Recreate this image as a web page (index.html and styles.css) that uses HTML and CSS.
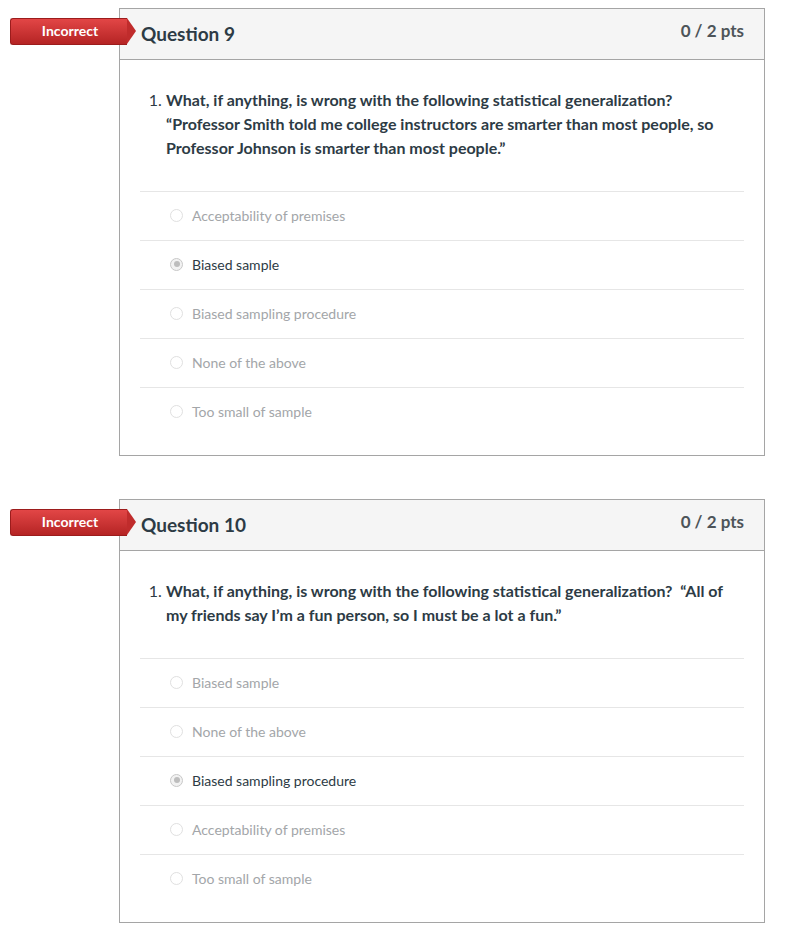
FILE: index.html
```html
<!DOCTYPE html>
<html>
<head>
<meta charset="utf-8">
<link rel="stylesheet" href="styles.css">
</head>
<body>
<div class="page">
  <div class="question">
    <div class="badge"><span>Incorrect</span></div>
    <div class="q-header">
      <div class="q-title">Question 9</div>
      <div class="q-pts">0 / 2 pts</div>
    </div>
    <div class="q-body">
      <ol class="q-text">
        <li>What, if anything, is wrong with the following statistical generalization? “Professor Smith told me college instructors are smarter than most people, so Professor Johnson is smarter than most people.”</li>
      </ol>
      <div class="answers">
        <div class="answer"><span class="radio"></span><span class="label">Acceptability of premises</span></div>
        <div class="answer selected"><span class="radio"></span><span class="label">Biased sample</span></div>
        <div class="answer"><span class="radio"></span><span class="label">Biased sampling procedure</span></div>
        <div class="answer"><span class="radio"></span><span class="label">None of the above</span></div>
        <div class="answer"><span class="radio"></span><span class="label">Too small of sample</span></div>
      </div>
    </div>
  </div>

  <div class="question">
    <div class="badge"><span>Incorrect</span></div>
    <div class="q-header">
      <div class="q-title">Question 10</div>
      <div class="q-pts">0 / 2 pts</div>
    </div>
    <div class="q-body">
      <ol class="q-text">
        <li>What, if anything, is wrong with the following statistical generalization?&nbsp; “All of my friends say I’m a fun person, so I must be a lot a fun.”</li>
      </ol>
      <div class="answers">
        <div class="answer"><span class="radio"></span><span class="label">Biased sample</span></div>
        <div class="answer"><span class="radio"></span><span class="label">None of the above</span></div>
        <div class="answer selected"><span class="radio"></span><span class="label">Biased sampling procedure</span></div>
        <div class="answer"><span class="radio"></span><span class="label">Acceptability of premises</span></div>
        <div class="answer"><span class="radio"></span><span class="label">Too small of sample</span></div>
      </div>
    </div>
  </div>
</div>
</body>
</html>
```

FILE: styles.css
```css
html, body {
  margin: 0;
  padding: 0;
  background: #ffffff;
}
body {
  font-family: Lato, "Open Sans", "Liberation Sans", sans-serif;
  color: #2d3b45;
}
.page {
  padding: 8px 29px 0 119px;
  display: flex;
  flex-direction: column;
  gap: 43px;
}
.question {
  position: relative;
  border: 1px solid #a5a5a5;
  background: #fff;
}
.badge {
  position: absolute;
  left: -110px;
  top: 9px;
  width: 117px;
  height: 27px;
  background: linear-gradient(#e24646, #b52424);
  border: 1px solid #9c1c1c;
  border-right: none;
  border-radius: 3px 0 0 3px;
  box-sizing: border-box;
  color: #fff;
  font-weight: 700;
  font-size: 14px;
  line-height: 24px;
  z-index: 2;
}
.badge span {
  display: block;
  width: 118px;
  text-align: center;
}
.badge::after {
  content: "";
  position: absolute;
  right: -9px;
  top: -1px;
  border-top: 13.5px solid transparent;
  border-bottom: 13.5px solid transparent;
  border-left: 9px solid #c02c2c;
}
.q-header {
  background: #f5f5f5;
  border-bottom: 1px solid #a5a5a5;
  height: 50px;
  display: flex;
  justify-content: space-between;
  padding: 0 20px 0 21px;
}
.q-title {
  font-size: 19px;
  font-weight: 700;
  line-height: 20px;
  padding-top: 15px;
  color: #2d3b45;
}
.q-pts {
  font-size: 17px;
  font-weight: 700;
  line-height: 18px;
  padding-top: 13px;
  color: #4d5459;
}
.q-body {
  padding: 28px 20px 19px 20px;
}
.q-text {
  margin: 0 0 31px 0;
  padding: 0 20px 0 26px;
  font-size: 16px;
  font-weight: 700;
  line-height: 24px;
  color: #2d3b45;
}
.q-text li::marker {
  font-weight: 400;
}
.answers {
  display: flex;
  flex-direction: column;
}
.answer {
  border-top: 1px solid #e6e6e6;
  height: 46px;
  padding-bottom: 2px;
  display: flex;
  align-items: center;
  padding-left: 30px;
  gap: 9px;
  font-size: 14px;
  color: #a3a6a9;
}
.answer .radio {
  width: 13px;
  height: 13px;
  border-radius: 50%;
  border: 1px solid #e0e0e0;
  background: #fff;
  box-sizing: border-box;
  position: relative;
}
.answer.selected {
  color: #2d3b45;
}
.answer.selected .radio {
  border-color: #c8c8c8;
  background: #f2f2f2;
}
.answer.selected .radio::after {
  content: "";
  position: absolute;
  left: 2.5px;
  top: 2.5px;
  width: 6px;
  height: 6px;
  border-radius: 50%;
  background: #bdbdbd;
}
```
